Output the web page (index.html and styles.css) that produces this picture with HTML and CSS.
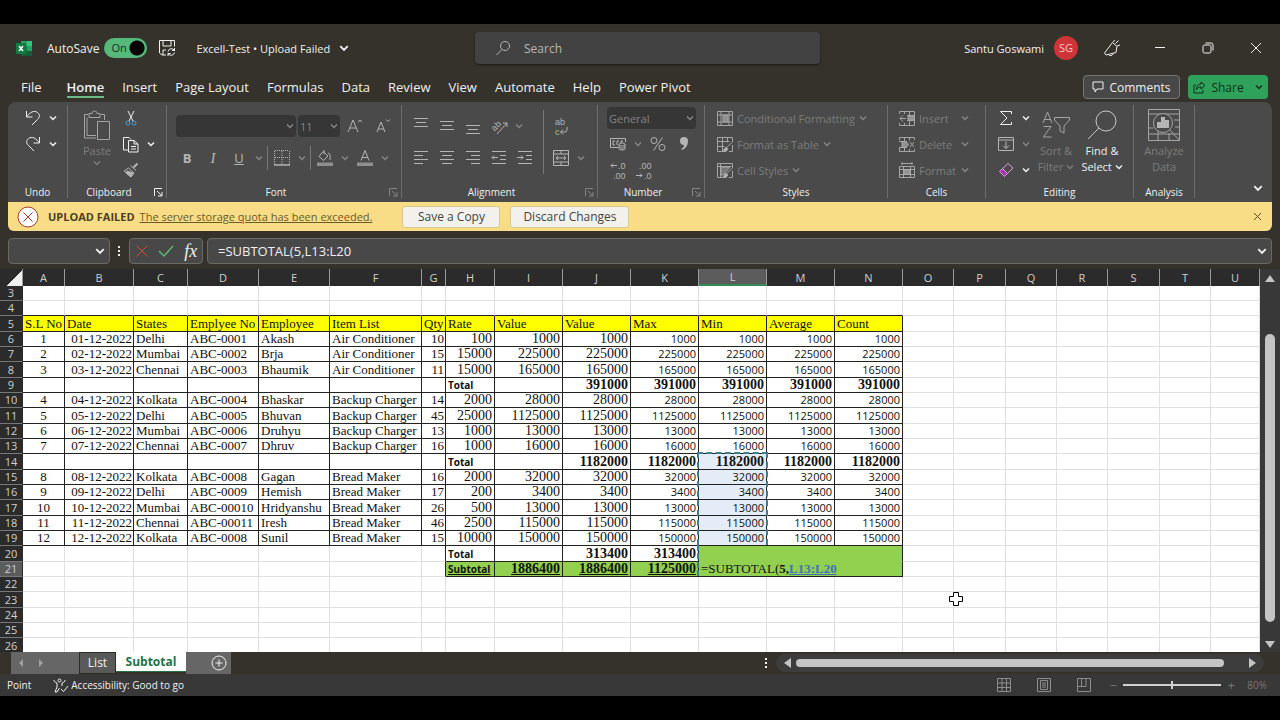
FILE: index.html
```
<!DOCTYPE html>
<html lang="en">
<head>
  <meta charset="UTF-8">
  <title>Excell-Test</title>
  <link rel="stylesheet" href="styles.css">
</head>
<body>
  <svg class="defs" aria-hidden="true">
    <symbol id="chev" viewBox="0 0 8 8"><path d="M1 2.500l3 3 3-3"/></symbol>
    <symbol id="launch" viewBox="0 0 9 9"><path d="M.5 8V.5H8M3 3l5 5M8 4v4H4"/></symbol>
  </svg>

  <div class="app">
    <header class="titlebar">
      <div class="title-left">
        <svg class="logo" width="17" height="17" viewBox="0 0 17 17">
          <path fill="#21a366" d="M5 1h6v5H5z"/><path fill="#33c481" d="M11 1h5v5h-5z"/>
          <path fill="#107c41" d="M5 6h6v5H5z"/><path fill="#21a366" d="M11 6h5v5h-5z"/>
          <path fill="#185c37" d="M5 11h11v5H5z"/><path fill="#107c41" d="M0 3h10v11H0z"/>
          <path stroke="#fff" stroke-width="1.5" d="M3 6l4 5M7 6l-4 5"/>
        </svg>
        <label for="autosave">AutoSave</label>
        <span class="toggle"><input type="checkbox" id="autosave" checked><span>On</span></span>
        <button class="plain" aria-label="Save">
          <svg width="18" height="18" viewBox="0 0 18 18"><path d="M8 16H4l-2.500-2V1.500h15v6M5 1.500v5.500h8V1.500M5 16v-5h3M10 12.500a3.500 3.500 0 0 1 6.500-1V9M16.500 11.500H14M16.500 13.500a3.500 3.500 0 0 1-6.500 1V17M10 14.500h2.500"/></svg>
        </button>
        <button class="plain file-name">Excell-Test • Upload Failed <svg class="chev big"><use href="#chev"/></svg></button>
      </div>
      <div class="search">
        <svg width="16" height="16" viewBox="0 0 16 16"><circle cx="10" cy="6" r="4.500"/><path d="M7 9.500L1.500 15"/></svg>
        <input type="text" placeholder="Search" aria-label="Search">
      </div>
      <div class="title-right">
        <span class="user">Santu Goswami</span>
        <span class="avatar">SG</span>
        <button class="win" aria-label="Coming soon"><svg width="18" height="18" viewBox="0 0 18 18"><path d="M9.500 3.500L1.500 14l1.500 2 10-2.500 1-6zM5.500 15.500c1 2 5 1 4.500-1M10.500 3l1-2M12.500 4.500l3-3M14 7l3-1"/></svg></button>
        <button class="win" aria-label="Minimize"><svg width="12" height="12" viewBox="0 0 12 12"><path d="M1 5.500h10"/></svg></button>
        <button class="win" aria-label="Restore"><svg width="12" height="12" viewBox="0 0 12 12"><rect x="1" y="3" width="8" height="8" rx="1.500"/><path d="M3.500 1H9a2 2 0 0 1 2 2v5.500"/></svg></button>
        <button class="win" aria-label="Close"><svg width="12" height="12" viewBox="0 0 12 12"><path d="M1 1l10 10M11 1L1 11"/></svg></button>
      </div>
    </header>

    <nav class="tabs">
      <a href="#" class="file">File</a>
      <a href="#" class="active">Home</a>
      <a href="#">Insert</a>
      <a href="#">Page Layout</a>
      <a href="#">Formulas</a>
      <a href="#">Data</a>
      <a href="#">Review</a>
      <a href="#">View</a>
      <a href="#">Automate</a>
      <a href="#">Help</a>
      <a href="#">Power Pivot</a>
      <span class="grow"></span>
      <button class="comments"><svg width="12" height="12" viewBox="0 0 12 12"><path d="M1 1h10v7H5l-2 3V8H1z"/></svg>Comments</button>
      <button class="share"><svg width="13" height="13" viewBox="0 0 13 13"><path d="M3 4H1v8h9V9M8 1l4 3.500L8 8V6C6 6 4.500 6.500 3.500 8.500 3.500 5 5 3 8 3z"/></svg>Share<svg class="chev"><use href="#chev"/></svg></button>
    </nav>

    <section class="ribbon">
      <div class="group g-undo">
        <div class="body">
          <div class="row lit">
            <button class="ic" aria-label="Undo"><svg width="16" height="16" viewBox="0 0 16 16"><path d="M1.500 1v6h6M1.500 7C5 2 9 0 12.500 2.500c3 2.500 2 5 0 7L7 15"/></svg></button>
            <button class="dd" aria-label="Undo list"><svg class="chev"><use href="#chev"/></svg></button>
          </div>
          <div class="row lit">
            <button class="ic" aria-label="Redo"><svg width="16" height="16" viewBox="0 0 16 16"><path d="M14.500 1v6h-6M14.500 7C11 2 7 0 3.500 2.500c-3 2.500-2 5 0 7L9 15"/></svg></button>
            <button class="dd" aria-label="Redo list"><svg class="chev"><use href="#chev"/></svg></button>
          </div>
        </div>
        <div class="name"><span>Undo</span></div>
      </div>

      <div class="group g-clip">
        <div class="body split">
          <button class="tall">
            <svg width="30" height="32" viewBox="0 0 30 32"><path d="M14 29H2.500V5.500H6M19 5.500h3.500V11M7 8.500v-4h3a2.500 2.500 0 0 1 5 0h3v4zM5 8.500v18h9M15.500 12.500h12v18h-12z"/></svg>
            Paste
            <svg class="chev"><use href="#chev"/></svg>
          </button>
          <div>
            <div class="row lit"><button class="ic" aria-label="Cut"><svg width="14" height="16" viewBox="0 0 14 16"><path d="M4 1l5 10M10 1L5 11"/><g stroke="#4a9fe0"><circle cx="4" cy="13" r="2"/><circle cx="10" cy="13" r="2"/></g></svg></button></div>
            <div class="row lit"><button class="ic" aria-label="Copy"><svg width="18" height="17" viewBox="0 0 18 17"><path d="M6 14H1.500V1.500H7l2 2M6.500 4.500H12l4 3.500v8H6.500zM12 4.500V8h4M9 10.500h5M9 13h5"/></svg></button><button class="dd" aria-label="Copy list"><svg class="chev"><use href="#chev"/></svg></button></div>
            <div class="row"><button class="ic" aria-label="Format painter"><svg width="16" height="16" viewBox="0 0 16 16"><path stroke-width="2" d="M14.500 1.500l-4 4"/><path d="M7.500 3.500l5.500 5M5.500 6l5.500 5-3 4-7-6z"/><path fill="#b5b5b5" d="M4 9l6 2-2 4-5-4z"/></svg></button></div>
          </div>
        </div>
        <div class="name"><span>Clipboard</span><button class="launch lit" aria-label="Clipboard options"><svg width="9" height="9"><use href="#launch"/></svg></button></div>
      </div>

      <div class="group g-font">
        <div class="body two">
          <div class="row gap">
            <span class="pick font-pick"><select aria-label="Font"><option></option></select><svg class="chev"><use href="#chev"/></svg></span>
            <span class="pick size-pick"><select aria-label="Font size"><option>11</option></select><svg class="chev"><use href="#chev"/></svg></span>
            <button class="ic" aria-label="Increase font size"><svg width="16" height="16" viewBox="0 0 16 16"><path d="M1 14L6 2l5 12M3 10h6M11 4l2-2 2 2"/></svg></button>
            <button class="ic" aria-label="Decrease font size"><svg width="16" height="16" viewBox="0 0 16 16"><path d="M2 14L6 4l4 10M3.500 11h5M11 1.500l2 2 2-2"/></svg></button>
          </div>
          <div class="row">
            <button class="ic"><b>B</b></button>
            <button class="ic"><i>I</i></button>
            <button class="ic"><u>U</u></button>
            <button class="dd" aria-label="Underline list"><svg class="chev"><use href="#chev"/></svg></button>
            <span class="sep"></span>
            <button class="ic" aria-label="Borders"><svg width="16" height="16" viewBox="0 0 16 16"><path stroke-dasharray="1 1" d="M1 .5h14M1 7.500h14M.5 1v13M8 1v13M15.500 1v13"/><path stroke-width="1.500" d="M0 15h16"/></svg></button>
            <button class="dd" aria-label="Borders list"><svg class="chev"><use href="#chev"/></svg></button>
            <span class="sep"></span>
            <button class="ic" aria-label="Fill colour"><svg width="16" height="16" viewBox="0 0 16 16"><path d="M7 0v4M6 1.500L2 6.500l4.500 4L11 6zM11 3c2.500 1 2.500 3 2 7"/><path stroke="none" fill="#8f8f8f" d="M0 12.500h16V16H0z"/></svg></button>
            <button class="dd" aria-label="Fill list"><svg class="chev"><use href="#chev"/></svg></button>
            <button class="ic" aria-label="Font colour"><svg width="16" height="16" viewBox="0 0 16 16"><path d="M4 10.500L8 .5l4 10M5.500 7.500h5"/><path stroke="none" fill="#8f8f8f" d="M0 12.500h16V16H0z"/></svg></button>
            <button class="dd" aria-label="Font colour list"><svg class="chev"><use href="#chev"/></svg></button>
          </div>
        </div>
        <div class="name"><span>Font</span><button class="launch" aria-label="Font options"><svg width="9" height="9"><use href="#launch"/></svg></button></div>
      </div>

      <div class="group g-align">
        <div class="body two split">
          <div class="align-left">
            <div class="row">
              <button class="ic" aria-label="Top align"><svg width="16" height="16" viewBox="0 0 16 16"><path d="M1 .5h14M3 4.500h10M1 8.500h14"/></svg></button>
              <button class="ic" aria-label="Middle align"><svg width="16" height="16" viewBox="0 0 16 16"><path d="M1 3.500h14M3 7.500h10M1 11.500h14"/></svg></button>
              <button class="ic" aria-label="Bottom align"><svg width="16" height="16" viewBox="0 0 16 16"><path d="M1 7.500h14M3 11.500h10M1 15.500h14"/></svg></button>
              <button class="ic" aria-label="Orientation"><svg width="18" height="18" viewBox="0 0 18 18"><text x="1" y="12" transform="rotate(-45 6 9)" class="ab">ab</text><path d="M7 17L17 6M13 6h4v4"/></svg></button>
              <button class="dd" aria-label="Orientation list"><svg class="chev"><use href="#chev"/></svg></button>
            </div>
            <div class="row">
              <button class="ic" aria-label="Align left"><svg width="16" height="16" viewBox="0 0 16 16"><path d="M1 1.500h14M1 5.500h9M1 9.500h14M1 13.500h9"/></svg></button>
              <button class="ic" aria-label="Centre"><svg width="16" height="16" viewBox="0 0 16 16"><path d="M1 1.500h14M3 5.500h10M1 9.500h14M3 13.500h10"/></svg></button>
              <button class="ic" aria-label="Align right"><svg width="16" height="16" viewBox="0 0 16 16"><path d="M1 1.500h14M6 5.500h9M1 9.500h14M6 13.500h9"/></svg></button>
              <button class="ic" aria-label="Decrease indent"><svg width="16" height="16" viewBox="0 0 16 16"><path d="M1 1.500h14M9 5.500h6M9 9.500h6M1 13.500h14M7 7.500H1M3 5.500l-2 2 2 2"/></svg></button>
              <button class="ic" aria-label="Increase indent"><svg width="16" height="16" viewBox="0 0 16 16"><path d="M1 1.500h14M9 5.500h6M9 9.500h6M1 13.500h14M0 7.500h6M4 5.500l2 2-2 2"/></svg></button>
            </div>
          </div>
          <div class="align-right">
            <div class="row"><button class="ic" aria-label="Wrap text"><svg width="16" height="20" viewBox="0 0 16 20"><text x="2" y="9" class="ab">ab</text><text x="2" y="19" class="ab">c</text><path d="M14 11v2q0 3-2 3H8M10 13.500L7.500 16l2.500 2.500"/></svg></button></div>
            <div class="row"><button class="ic" aria-label="Merge"><svg width="16" height="16" viewBox="0 0 16 16"><path d="M.5.5h15v15H.5zM.5 4h15M.5 12h15M8 .5V4M8 12v3M3 8h10M5 6L3 8l2 2M11 6l2 2-2 2"/></svg></button><button class="dd" aria-label="Merge list"><svg class="chev"><use href="#chev"/></svg></button></div>
          </div>
        </div>
        <div class="name"><span>Alignment</span><button class="launch" aria-label="Alignment options"><svg width="9" height="9"><use href="#launch"/></svg></button></div>
      </div>

      <div class="group g-num">
        <div class="body">
          <div class="row"><span class="pick num-pick"><select aria-label="Number format"><option>General</option></select><svg class="chev"><use href="#chev"/></svg></span></div>
          <div class="row">
            <button class="ic" aria-label="Accounting"><svg width="17" height="14" viewBox="0 0 17 14"><path d="M8 10.500H.5V1.500h15V5M5 4H3v4h2M7 8V4h2M13 4h-2v2M9 7.500c0-2 6-2 6 0v4c0 2-6 2-6 0zM9 7.500c0 2 6 2 6 0M9 10c0 1.500 6 1.500 6 0"/></svg></button>
            <button class="dd" aria-label="Accounting list"><svg class="chev"><use href="#chev"/></svg></button>
            <button class="ic" aria-label="Percent"><svg width="16" height="16" viewBox="0 0 16 16"><circle cx="4" cy="4.500" r="3"/><circle cx="12" cy="11.500" r="3"/><path d="M12.500 1.500l-9 13"/></svg></button>
            <button class="ic" aria-label="Comma"><svg width="10" height="14" viewBox="0 0 10 14"><path fill="#b5b5b5" stroke="none" d="M5 0a4 4 0 0 1 4 4c0 5-3 8-6 9l-1-1c2-1 3-2.500 3-4A4 4 0 1 1 5 0z"/></svg></button>
          </div>
          <div class="row">
            <button class="ic" aria-label="Increase decimal"><svg width="17" height="20" viewBox="0 0 17 20"><text x="8" y="9" class="ab">.0</text><text x="3" y="19" class="ab">.00</text><path d="M7 5.500H1M3 3.500l-2 2 2 2"/></svg></button>
            <button class="ic" aria-label="Decrease decimal"><svg width="17" height="20" viewBox="0 0 17 20"><text x="3" y="9" class="ab">.00</text><text x="8" y="19" class="ab">.0</text><path d="M0 15.500h6M4 13.500l2 2-2 2"/></svg></button>
          </div>
        </div>
        <div class="name"><span>Number</span><button class="launch" aria-label="Number options"><svg width="9" height="9"><use href="#launch"/></svg></button></div>
      </div>

      <div class="group g-styles">
        <div class="body">
          <button class="wide"><svg width="16" height="15" viewBox="0 0 16 15"><path d="M.5.5h15v14H.5zM.5 4h15M.5 11h15M4 .5v14M12 .5v14"/><path fill="#8f8f8f" d="M6 4h5v7H6z"/></svg>Conditional Formatting<svg class="chev"><use href="#chev"/></svg></button>
          <button class="wide"><svg width="16" height="15" viewBox="0 0 16 15"><path d="M7 14.500H.5V.5h15V5M.5 4.500h12M.5 9.500h7M5.500.5v14M10.500.5v5M15.500 5L9 11M15.500 8v6.500H12"/><path fill="#b5b5b5" d="M9 10l2 2-2 2.500H5.500z"/></svg>Format as Table<svg class="chev"><use href="#chev"/></svg></button>
          <button class="wide"><svg width="16" height="15" viewBox="0 0 16 15"><path fill="#777" d="M4 4h9l-7 8H4z"/><path d="M7 14.500H.5V.5h15V5M.5 3.500h14M3.500.5v14M15.500 5L9 11M15.500 8v6.500H12"/><path fill="#b5b5b5" d="M9 10l2 2-2 2.500H5.500z"/></svg>Cell Styles<svg class="chev"><use href="#chev"/></svg></button>
        </div>
        <div class="name"><span>Styles</span></div>
      </div>

      <div class="group g-cells">
        <div class="body">
          <button class="wide"><svg width="16" height="15" viewBox="0 0 16 15"><path d="M.5 3V.5h15v14H.5V12M5.500.5V3M10.500.5v14M8 4.500h7M8 9.500h7M5.500 12v2M7 7.500H1M4 4.500l-3 3 3 3"/><path fill="#8f8f8f" d="M9 5h6v4H9z"/></svg><span>Insert</span><svg class="chev"><use href="#chev"/></svg></button>
          <button class="wide"><svg width="16" height="15" viewBox="0 0 16 15"><path d="M.5 3V.5h15V3M.5 11v3.500h15V12M5.500.5v4M10.500.5v3M5.500 11v3M10.500 12v2M0 4.500h8M0 10.500h8M11 5l4 5M15 5l-4 5"/><path fill="#8f8f8f" d="M3 5h4l3 2.500L7 10H3z"/></svg><span>Delete</span><svg class="chev"><use href="#chev"/></svg></button>
          <button class="wide"><svg width="16" height="16" viewBox="0 0 16 16"><path d="M3 0v3M13 0v3M3 1.500h10M.5 4.500h15v11H.5zM.5 7.500h15M.5 12.500h15M4.500 4.500v11M11.500 4.500v11"/><path fill="#8f8f8f" d="M5 8h6v4H5z"/></svg><span>Format</span><svg class="chev"><use href="#chev"/></svg></button>
        </div>
        <div class="name"><span>Cells</span></div>
      </div>

      <div class="group g-edit">
        <div class="body split">
          <div>
            <div class="row lit"><button class="ic" aria-label="AutoSum"><svg width="14" height="16" viewBox="0 0 14 16"><path d="M12.500 4V1.500h-11L8 8l-6.500 6.500h11V12"/></svg></button><button class="dd" aria-label="Sum list"><svg class="chev"><use href="#chev"/></svg></button></div>
            <div class="row"><button class="ic" aria-label="Fill"><svg width="16" height="14" viewBox="0 0 16 14"><path d="M.5.5h15v13H.5zM.5 3h15M8 4.500v7M5 8.500l3 3 3-3"/></svg></button><button class="dd" aria-label="Fill series list"><svg class="chev"><use href="#chev"/></svg></button></div>
            <div class="row lit"><button class="ic" aria-label="Clear"><svg width="16" height="16" viewBox="0 0 16 16"><g stroke="#d9a0dc"><path d="M10 1.500l5 4.500-8.500 8.500-5-5z"/><path fill="#a335ab" d="M4.500 6.500l5 5-3 3-5-5z"/></g></svg></button><button class="dd" aria-label="Clear list"><svg class="chev"><use href="#chev"/></svg></button></div>
          </div>
          <button class="tall">
            <svg width="30" height="32" viewBox="0 0 30 32"><path d="M2 14L6.500 3 11 14M3.500 10.500h6M2.500 17.500H10L2.500 28H10.500M13.500 8.500h15v2.500L23 17v7l-4-2v-5l-5.500-6z"/></svg>
            <span>Sort &amp;<br>Filter <svg class="chev"><use href="#chev"/></svg></span>
          </button>
          <button class="tall lit">
            <svg width="30" height="32" viewBox="0 0 30 32"><circle cx="19" cy="12" r="10"/><path d="M12 19L1 30"/></svg>
            <span>Find &amp;<br>Select <svg class="chev"><use href="#chev"/></svg></span>
          </button>
        </div>
        <div class="name"><span>Editing</span></div>
      </div>

      <div class="group g-analysis">
        <div class="body split">
          <button class="tall">
            <svg width="32" height="32" viewBox="0 0 32 32"><path d="M.5.5h31v31H.5zM.5 5h31M.5 19h5M.5 25h31M10 22v9M21 24v7M26 11h6M27 18h5"/><circle cx="15" cy="14" r="9.500" fill="#4a4a4a"/><path d="M22 21l9 10"/><path stroke="none" fill="#b5b5b5" d="M9 13h4v6H9zM13 8h4v11h-4zM17 11h4v8h-4z"/></svg>
            <span>Analyze<br>Data</span>
          </button>
        </div>
        <div class="name"><span>Analysis</span></div>
      </div>
      <button class="collapse lit" aria-label="Collapse ribbon"><svg class="chev big"><use href="#chev"/></svg></button>
    </section>

    <div class="message">
      <svg width="22" height="22" viewBox="0 0 22 22"><circle cx="11" cy="11" r="10" fill="#fff" stroke="#b0392a"/><path stroke="#b0392a" d="M6.500 6.500l9 9M15.500 6.500l-9 9"/></svg>
      <strong>UPLOAD FAILED</strong>
      <a href="#">The server storage quota has been exceeded.</a>
      <button class="save-copy">Save a Copy</button>
      <button class="discard">Discard Changes</button>
      <span class="grow"></span>
      <button class="plain" aria-label="Dismiss"><svg width="9" height="9" viewBox="0 0 9 9"><path stroke="#5b4b20" d="M1 1l7 7M8 1L1 8"/></svg></button>
    </div>

    <div class="formula">
      <span class="namebox"><input type="text" aria-label="Name box"><svg class="chev big"><use href="#chev"/></svg></span>
      <span class="dots"></span>
      <div class="fx">
        <button aria-label="Cancel"><svg width="14" height="14" viewBox="0 0 14 14"><path stroke="#d04a44" d="M1.500 1.500l11 11M12.500 1.500l-11 11"/></svg></button>
        <button aria-label="Enter"><svg width="16" height="14" viewBox="0 0 16 14"><path stroke="#5db878" stroke-width="1.500" d="M1 7l5 5 9-10"/></svg></button>
        <button class="fn">fx</button>
      </div>
      <span class="entry"><input type="text" value="=SUBTOTAL(5,L13:L20" aria-label="Formula"><svg class="chev big"><use href="#chev"/></svg></span>
    </div>

    <main class="sheet">
      <div class="cells">
        <table>
          <colgroup id="cols"></colgroup>
          <thead><tr id="letters"></tr></thead>
          <tbody id="rows"></tbody>
        </table>
        <svg class="cursor" width="16" height="16" viewBox="0 0 16 16"><path fill="#fff" stroke="#000" d="M5.500 1.500h5v4h4v5h-4v4h-5v-4h-4v-5h4z"/></svg>
      </div>
      <div class="vscroll"><span class="tri up"></span><span class="thumb"></span><span class="tri down"></span></div>
    </main>

    <div class="sheet-tabs">
      <div class="nav-btns"><button class="tri left" aria-label="Previous sheet"></button><button class="tri right" aria-label="Next sheet"></button></div>
      <button class="tab">List</button>
      <button class="tab current">Subtotal</button>
      <div class="add"><button aria-label="New sheet"><svg width="16" height="16" viewBox="0 0 16 16"><circle cx="8" cy="8" r="7"/><path d="M4.500 8h7M8 4.500v7"/></svg></button></div>
      <span class="grow"></span>
      <span class="dots"></span>
      <div class="hscroll"><span class="tri left"></span><span class="thumb"></span><span class="tri right"></span></div>
    </div>

    <footer class="status">
      <span>Point</span>
      <svg width="16" height="15" viewBox="0 0 16 15"><circle cx="6.500" cy="2.500" r="1.500"/><path d="M1 2c0 2 1 2 3 3v4l-2 5h2l2.500-4M12 2c0 2-1 2-3 3v3M8 11l2.500 2.500L15 8"/></svg>
      <span>Accessibility: Good to go</span>
      <span class="grow"></span>
      <div class="views">
        <button aria-label="Normal"><svg width="14" height="14" viewBox="0 0 14 14"><path d="M.5.5h13v13H.5zM.5 5h13M.5 9.500h13M5 .5v13M9.500.5v13"/></svg></button>
        <button aria-label="Page layout"><svg width="14" height="14" viewBox="0 0 14 14"><path d="M.5.5h13v13H.5zM3.500 2.500h7v9h-7zM5 5h4M5 7h4M5 9h4"/></svg></button>
        <button aria-label="Page break"><svg width="14" height="14" viewBox="0 0 14 14"><path d="M.5.5h13v13H.5zM.5 8.500h8.500V.5M4.500.5v8"/></svg></button>
      </div>
      <button class="zoom-btn">−</button>
      <input type="range" min="0" max="100" value="50" aria-label="Zoom">
      <button class="zoom-btn">+</button>
      <span class="pct-label">80%</span>
    </footer>
  </div>

  <script>
    const widths = [23, 42, 69, 54, 71, 71, 92, 24, 49, 68, 68, 68, 68, 68, 68, 51, 52, 51, 51, 52, 51];
    const letters = "ABCDEFGHIJKLMNOPQRSTU".split("");

    // no, date, state, employee no, employee, item, qty, rate, value
    const data = {
      6: ["1", "01-12-2022", "Delhi", "ABC-0001", "Akash", "Air Conditioner", "10", "100", "1000"],
      7: ["2", "02-12-2022", "Mumbai", "ABC-0002", "Brja", "Air Conditioner", "15", "15000", "225000"],
      8: ["3", "03-12-2022", "Chennai", "ABC-0003", "Bhaumik", "Air Conditioner", "11", "15000", "165000"],
      10: ["4", "04-12-2022", "Kolkata", "ABC-0004", "Bhaskar", "Backup Charger", "14", "2000", "28000"],
      11: ["5", "05-12-2022", "Delhi", "ABC-0005", "Bhuvan", "Backup Charger", "45", "25000", "1125000"],
      12: ["6", "06-12-2022", "Mumbai", "ABC-0006", "Druhyu", "Backup Charger", "13", "1000", "13000"],
      13: ["7", "07-12-2022", "Chennai", "ABC-0007", "Dhruv", "Backup Charger", "16", "1000", "16000"],
      15: ["8", "08-12-2022", "Kolkata", "ABC-0008", "Gagan", "Bread Maker", "16", "2000", "32000"],
      16: ["9", "09-12-2022", "Delhi", "ABC-0009", "Hemish", "Bread Maker", "17", "200", "3400"],
      17: ["10", "10-12-2022", "Mumbai", "ABC-00010", "Hridyanshu", "Bread Maker", "26", "500", "13000"],
      18: ["11", "11-12-2022", "Chennai", "ABC-00011", "Iresh", "Bread Maker", "46", "2500", "115000"],
      19: ["12", "12-12-2022", "Kolkata", "ABC-0008", "Sunil", "Bread Maker", "15", "10000", "150000"]
    };
    const head = ["S.L No", "Date", "States", "Emplyee No", "Employee", "Item List", "Qty", "Rate", "Value", "Value", "Max", "Min", "Average", "Count"];
    const totals = { 9: "391000", 14: "1182000" };
    const kinds = ["mid", "date", "", "", "", "", "date", "num", "num", "num", "calc", "calc", "calc", "calc"];

    function cell(r, c) {
      let text = "", cls = "";
      if (r === 5) { text = head[c] || ""; cls = c < 14 ? "head" : ""; }
      if (data[r] && c < 14) { text = data[r][Math.min(c, 8)]; cls = kinds[c]; }
      if (totals[r]) {
        if (c === 7) { text = "Total"; cls = "total"; }
        if (c > 8 && c < 14) { text = totals[r]; cls = "sum"; }
      }
      if (r === 20) {
        if (c === 7) { text = "Total"; cls = "total"; }
        if (c === 9 || c === 10) { text = "313400"; cls = "sum"; }
        if (c === 11) return '<td colspan="3" class="green line-r"></td>';
      }
      if (r === 21) {
        if (c === 7) { text = "Subtotal"; cls = "total green under"; }
        if (c === 8 || c === 9) { text = "1886400"; cls = "sum green under"; }
        if (c === 10) { text = "1125000"; cls = "sum green under"; }
        if (c === 11) return '<td colspan="3" class="green line-r line-b">=SUBTOTAL(<b>5,<span class="ref">L13:L20</span></b></td>';
      }
      if ((r === 20 || r === 21) && (c === 12 || c === 13)) return "";

      const boxed = c < 14 && r >= 5 && r <= 19;
      const footer = c >= 7 && c < 14 && (r === 20 || r === 21);
      if (boxed || footer || (c === 6 && r > 19 && r < 22)) cls += " line-r";
      if (boxed || footer || (r === 4 && c < 14)) cls += " line-b";
      if (c === 11 && r >= 14 && r <= 19) cls += " picked";
      if (c === 11 && r === 14) { cls += " range-start"; text += '<span class="range"></span><span class="range-tail"></span>'; }
      return `<td class="${cls.trim()}">${text}</td>`;
    }

    document.getElementById("cols").innerHTML = widths.map(w => `<col style="width:${w}px">`).join("") + "<col>";
    document.getElementById("letters").innerHTML = '<th class="corner"></th>' +
      letters.map(l => `<th class="${l === "L" ? "on" : ""}">${l}</th>`).join("");
    let html = "";
    for (let r = 3; r <= 26; r++) {
      html += `<tr><th class="${r === 21 ? "on" : ""}">${r}</th>` + letters.map((l, c) => cell(r, c)).join("") + "</tr>";
    }
    document.getElementById("rows").innerHTML = html;
  </script>
</body>
</html>
```
FILE: styles.css
```
* {
  box-sizing: border-box;
}
body {
  margin: 0;
  padding: 24px 0;
  height: 100vh;
  background: #000;
  font-family: "Open Sans", "Noto Sans", sans-serif;
  font-size: 12px;
  color: #f0f0f0;
}
button, input, select {
  font: inherit;
  color: inherit;
  background: none;
  border: 0;
  padding: 0;
  margin: 0;
  outline: 0;
}
button {
  white-space: nowrap;
}
svg {
  fill: none;
  stroke: currentColor;
  flex: none;
  overflow: visible;
}
.defs {
  position: absolute;
  width: 0;
  height: 0;
}
.chev {
  width: 8px;
  height: 8px;
  stroke-width: 1.5;
}
.chev.big {
  width: 10px;
  height: 10px;
}
.grow {
  flex: 1;
}
.app {
  height: 100%;
  display: flex;
  flex-direction: column;
  background: #35322b;
}

/* title bar */
.titlebar {
  display: grid;
  grid-template-columns: 475fr 345fr 460fr;
  height: 48px;
  align-items: center;
}
.title-left, .title-right {
  display: flex;
  align-items: center;
}
.title-left {
  padding-left: 16px;
}
.logo {
  margin-right: 14px;
  stroke: none;
}
.toggle {
  display: grid;
  margin: 0 11px 0 5px;
}
.toggle > * {
  grid-area: 1 / 1;
}
.toggle input {
  appearance: none;
  width: 43px;
  height: 20px;
  border-radius: 10px;
  background: radial-gradient(circle at 33px 10px, #000 7px, #57b87b 8px);
}
.toggle span {
  color: #12351f;
  font-size: 11px;
  line-height: 20px;
  padding-left: 7px;
  pointer-events: none;
}
.plain {
  display: flex;
  align-items: center;
}
.file-name {
  margin-left: 20px;
  gap: 9px;
  font-size: 11px;
}
.search {
  display: flex;
  align-items: center;
  gap: 13px;
  height: 32px;
  padding-left: 20px;
  background: #424242;
  border-radius: 4px;
  color: #b5b5b5;
  box-shadow: 0 1px 2px #1d1b17;
}
.search input {
  flex: 1;
  min-width: 0;
}
.search input::placeholder {
  color: #b5b5b5;
}
.title-right {
  justify-content: flex-end;
}
.user {
  font-size: 11px;
}
.avatar {
  width: 24px;
  height: 24px;
  margin: 0 10px;
  border-radius: 50%;
  background: #cf3438;
  color: #f4c9c9;
  font-size: 11px;
  line-height: 24px;
  text-align: center;
}
.win {
  display: grid;
  place-items: center;
  width: 48px;
  height: 32px;
}

/* menu tabs */
.tabs {
  display: flex;
  align-items: center;
  gap: 18px;
  height: 30px;
  padding: 0 12px 0 21px;
  font-size: 13px;
}
.tabs a {
  color: #f0f0f0;
  text-decoration: none;
  line-height: 18px;
  padding-top: 2px;
  border-bottom: 2px solid transparent;
}
.tabs .file {
  margin-right: 7px;
}
.tabs .active {
  font-weight: 600;
  border-color: #6dbb87;
}
.comments, .share {
  display: flex;
  align-items: center;
  justify-content: center;
  gap: 5px;
  height: 24px;
  border-radius: 4px;
  font-size: 12px;
}
.comments {
  width: 97px;
  background: #484848;
  border: 1px solid #77756f;
}
.share {
  width: 80px;
  margin-left: -10px;
  background: #2ea25a;
  color: #0e2e1a;
}
.share .chev {
  margin-left: 6px;
}

/* ribbon */
.ribbon {
  display: flex;
  height: 100px;
  margin: 0 8px;
  padding-top: 3px;
  background: #4a4a4a;
  border-radius: 8px 8px 0 0;
  color: #b5b5b5;
  font-size: 11px;
}
.group {
  display: flex;
  flex-direction: column;
  flex: none;
  height: 93px;
  border-right: 1px solid #6d6d6d;
}
.g-undo { width: 60px; }
.g-clip { width: 99px; }
.g-font { width: 235px; }
.g-align { width: 196px; }
.g-num { width: 107px; }
.g-styles { width: 183px; }
.g-cells { width: 98px; }
.g-edit { width: 148px; }
.g-analysis { width: 61px; }
.body {
  flex: none;
  height: 79px;
  padding-left: 7px;
}
.two {
  padding-top: 5px;
}
.split {
  display: flex;
}
.row {
  display: flex;
  align-items: center;
  height: 26px;
}
.two .row {
  height: 32px;
}
.lit, .lit .dd {
  color: #f0f0f0;
}
.ic, .dd {
  display: grid;
  place-items: center;
  width: 26px;
  height: 24px;
}
.dd {
  width: 14px;
}
.row:not(.lit) .dd {
  color: #858585;
}
.ic b, .ic i, .ic u {
  font-size: 13px;
}
.ic i {
  font-family: "Liberation Serif", serif;
  font-size: 15px;
}
.sep {
  width: 1px;
  height: 24px;
  margin: 0 1px;
  background: #777;
}
.ab {
  fill: #b5b5b5;
  stroke: none;
  font-family: "Liberation Sans", sans-serif;
  font-size: 9px;
}
.g-undo .body {
  padding-left: 12px;
}
.g-clip .body {
  padding-left: 8px;
}
.g-clip .tall {
  width: 42px;
}
.gap {
  padding-left: 2px;
  gap: 2px;
}
.pick {
  display: grid;
  align-items: center;
  height: 22px;
  border-radius: 4px;
  background: #363636;
  color: #858585;
}
.pick > * {
  grid-area: 1 / 1;
}
.pick select {
  appearance: none;
  width: 100%;
  height: 22px;
  padding-left: 2px;
}
.pick .chev {
  justify-self: end;
  margin-right: 2px;
  pointer-events: none;
}
.font-pick { width: 120px; }
.size-pick { width: 42px; }
.num-pick {
  width: 89px;
  margin-left: 2px;
}
.g-align .body {
  padding-left: 6px;
}
.align-left {
  width: 136px;
  height: 64px;
  border-right: 1px solid #777;
}
.align-right {
  padding-left: 4px;
}
.wide {
  display: flex;
  align-items: center;
  gap: 4px;
  height: 26px;
  padding-left: 5px;
  color: #7d7d7d;
}
.wide svg {
  color: #a5a5a5;
}
.wide .chev {
  color: #858585;
}
.g-cells .wide {
  padding-left: 4px;
}
.g-cells .wide span {
  width: 38px;
  text-align: left;
}
.tall {
  display: flex;
  flex-direction: column;
  align-items: center;
  width: 46px;
  padding-top: 4px;
  line-height: 16px;
}
.tall > svg:first-child {
  margin-bottom: 2px;
}
.tall:not(.lit) {
  color: #7d7d7d;
}
.tall:not(.lit) > svg:first-child {
  color: #a5a5a5;
}
.tall.lit > svg {
  color: #c9c9c9;
}
.g-analysis .body {
  padding-left: 0;
  justify-content: center;
}
.name {
  display: flex;
  flex: none;
  align-items: center;
  height: 16px;
  color: #f0f0f0;
  font-size: 10px;
}
.name span {
  flex: 1;
  text-align: center;
}
.launch {
  display: grid;
  place-items: center;
  width: 16px;
  height: 16px;
}
.launch:not(.lit) {
  color: #858585;
}
.collapse {
  align-self: flex-end;
  margin: 0 9px 6px auto;
}

/* message bar */
.message {
  display: flex;
  align-items: center;
  height: 29px;
  margin: 0 8px;
  padding: 0 10px 0 9px;
  background: #f8dd86;
  border-radius: 0 0 6px 6px;
  color: #4d4020;
  font-size: 11px;
}
.message strong {
  margin: 0 5px 0 9px;
  font-weight: 700;
}
.message a {
  color: #6b5a2a;
}
.save-copy, .discard {
  height: 22px;
  margin-left: 10px;
  background: #f3f1ec;
  border: 1px solid #d8c88c;
  border-radius: 3px;
  color: #444;
  font-size: 12px;
}
.save-copy {
  width: 98px;
  margin-left: 30px;
}
.discard {
  width: 119px;
}

/* formula bar */
.formula {
  display: flex;
  align-items: center;
  margin: 7px 8px 5px;
}
.namebox, .fx, .entry {
  display: flex;
  align-items: center;
  height: 26px;
  background: #484848;
  border: 1px solid #6b6964;
  border-radius: 4px;
}
.namebox {
  width: 102px;
}
.namebox input {
  flex: 1;
  min-width: 0;
}
.namebox svg, .entry svg {
  margin-right: 4px;
}
.dots {
  width: 2px;
  height: 10px;
  margin: 0 9px 0 8px;
  background: repeating-linear-gradient(#f0f0f0 0 2px, transparent 2px 4px);
}
.fx {
  width: 74px;
  margin-right: 4px;
  justify-content: space-around;
}
.fn {
  font-family: "Liberation Serif", serif;
  font-style: italic;
  font-size: 18px;
  line-height: 20px;
}
.fx button {
  display: grid;
  place-items: center;
}
.entry {
  flex: 1;
}
.entry input {
  flex: 1;
  padding-left: 10px;
  font-size: 13px;
}

/* sheet */
.sheet {
  display: flex;
  flex: 1;
  min-height: 0;
  overflow: hidden;
}
.cells {
  position: relative;
  flex: 1;
  min-width: 0;
  background: #fff;
}
table {
  width: 100%;
  table-layout: fixed;
  border-collapse: separate;
  border-spacing: 0;
  color: #111;
}
th {
  padding: 0;
  height: 15px;
  background: #2b2b2b;
  border-right: 1px solid #9a9a9a;
  font-weight: 400;
  font-size: 11px;
  line-height: 14px;
  color: #d0d0d0;
}
thead th {
  height: 17px;
}
tbody th {
  border-right-color: #2b2b2b;
  border-bottom: 1px solid #777;
}
th.on {
  background: #5c5c5c;
}
thead th.on {
  border-bottom: 2px solid #2f8a55;
}
.corner {
  background: linear-gradient(135deg, #2b2b2b 60%, #f0f0f0 60%);
}
td {
  height: 15px;
  padding: 0 2px;
  border-right: 1px solid #e0e0e0;
  border-bottom: 1px solid #e0e0e0;
  font-family: Georgia, "Liberation Serif", serif;
  font-size: 13px;
  line-height: 14px;
  white-space: nowrap;
}
tbody tr:nth-child(3n) > * {
  height: 16px;
}
.line-r {
  border-right-color: #222;
}
.head {
  background: #ffff00;
}
.mid {
  text-align: center;
}
.date, .num, .calc, .sum {
  text-align: right;
}
.date {
  padding-right: 1px;
}
.num {
  font-size: 14px;
}
.calc {
  font-family: "Open Sans", sans-serif;
  font-size: 11px;
}
.total {
  font-family: "Open Sans", sans-serif;
  font-size: 10px;
  font-weight: 700;
}
.sum {
  font-size: 14px;
  font-weight: 700;
}
.green {
  background: #92d050;
  border-bottom-color: #92d050;
}
.line-b {
  border-bottom-color: #222;
}
.under {
  text-decoration: underline;
}
.picked {
  background: #e4ecf7;
}
.range-start {
  position: relative;
}
.range, .range-tail {
  position: absolute;
  top: -2px;
  left: -2px;
  pointer-events: none;
}
.range {
  right: -2px;
  height: 93px;
  border: 2px dashed #3c7f93;
  border-bottom: 0;
}
.range-tail {
  top: 91px;
  height: 31px;
  border-left: 2px dashed #3c7f93;
}
.ref {
  color: #4472b8;
  text-decoration: underline;
}
.cursor {
  position: absolute;
  left: 948px;
  top: 322px;
}
.vscroll {
  display: flex;
  flex-direction: column;
  align-items: center;
  width: 20px;
  padding: 6px 0 4px;
  background: #383838;
}
.vscroll .thumb {
  width: 10px;
  flex: 1;
  margin: 52px 0 19px;
  border-radius: 5px;
  background: #c4c4c4;
}
.tri {
  border: 5px solid transparent;
}
.up {
  border-top: 0;
  border-bottom: 7px solid #c4c4c4;
}
.down {
  border-bottom: 0;
  border-top: 7px solid #c4c4c4;
}
.left {
  border-left: 0;
  border-right: 7px solid #c4c4c4;
}
.right {
  border-right: 0;
  border-left: 7px solid #c4c4c4;
}

/* sheet tabs */
.sheet-tabs {
  display: flex;
  align-items: center;
  height: 22px;
  padding: 0 16px 0 11px;
}
.nav-btns {
  display: flex;
  align-items: center;
  gap: 16px;
  width: 68px;
  height: 22px;
  padding-left: 8px;
  background: #666;
}
.nav-btns .tri {
  border-width: 4px;
}
.nav-btns .left {
  border-left-width: 0;
  border-right-color: #a0a0a0;
}
.nav-btns .right {
  border-right-width: 0;
  border-left-color: #a0a0a0;
}
.tab {
  width: 37px;
  height: 22px;
  padding-bottom: 2px;
  background: #5a5a5a;
  border: 1px solid #2e2c27;
}
.tab.current {
  width: 70px;
  height: 20px;
  align-self: flex-start;
  padding: 0;
  background: #fff;
  border: 0;
  border-bottom: 1px solid #217346;
  color: #217346;
  font-weight: 700;
}
.add {
  display: flex;
  align-items: center;
  justify-content: flex-end;
  width: 45px;
  height: 22px;
  padding-right: 4px;
  background: #666;
}
.add button {
  display: flex;
}
.hscroll {
  display: flex;
  align-items: center;
  width: 488px;
  height: 18px;
  padding: 0 8px;
  border-radius: 9px;
  background: #3d3d3d;
}
.hscroll .thumb {
  flex: 1;
  height: 8px;
  margin: 0 25px 0 5px;
  border-radius: 4px;
  background: #c4c4c4;
}

/* status bar */
.status {
  display: flex;
  align-items: center;
  height: 22px;
  padding: 0 13px 0 7px;
  background: #383838;
  font-size: 10px;
}
.status > svg {
  margin: 0 2px 0 22px;
}
.views {
  display: flex;
  gap: 26px;
  margin-right: 14px;
  color: #8c8c8c;
}
.views button {
  display: flex;
}
.zoom-btn {
  width: 16px;
  color: #777;
  font-size: 13px;
}
.status input {
  appearance: none;
  width: 98px;
  height: 2px;
  margin: 0 2px;
  background: #d0d0d0;
}
.status input::-webkit-slider-thumb {
  appearance: none;
  width: 2px;
  height: 8px;
  background: #d0d0d0;
}
.pct-label {
  margin-left: 8px;
  color: #777;
}
```
